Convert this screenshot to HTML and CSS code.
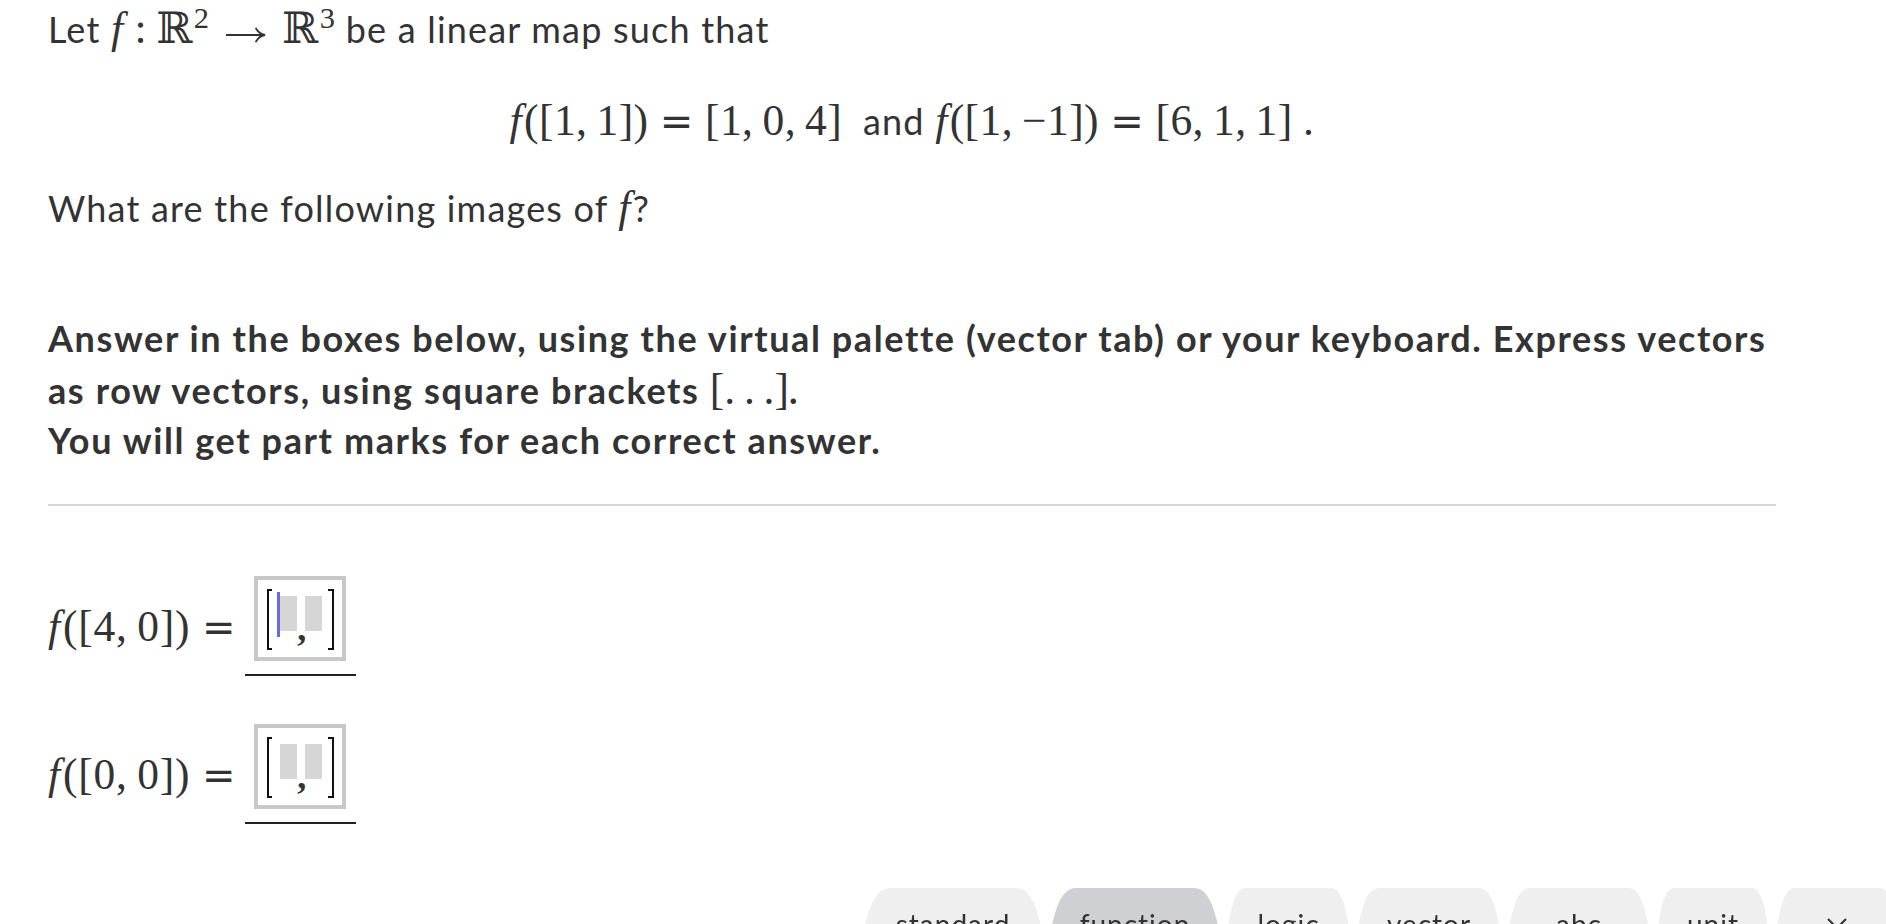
FILE: index.html
```html
<!DOCTYPE html>
<html lang="en">
<head>
<meta charset="utf-8">
<title>Linear map question</title>
<link rel="stylesheet" href="styles.css">
</head>
<body>
<main class="page">
  <p class="intro">Let <span class="m"><i>f</i>&#8201;:&#8201;ℝ<sup>2</sup> <svg class="arrow" width="42" height="18" viewBox="0 0 42 18"><path d="M1 9 H39" stroke="#333" stroke-width="1.8" fill="none"/><path d="M31 2.5 C33 6 36 8.2 40 9 C36 9.8 33 12 31 15.5" stroke="#333" stroke-width="1.8" fill="none" stroke-linecap="round"/></svg> ℝ<sup>3</sup></span> be a linear map such that</p>
  <p class="display"><span class="m"><i>f</i>([1,&#8201;1]) <span class="eq">=</span> [1,&#8201;0,&#8201;4]</span>&nbsp; and <span class="m"><i>f</i>([1,&#8201;−1]) <span class="eq">=</span> [6,&#8201;1,&#8201;1]</span> <span class="m">.</span></p>
  <p class="question">What are the following images of <span class="m"><i>f</i></span>?</p>
  <div class="instr">
    <div>Answer in the boxes below, using the virtual palette (vector tab) or your keyboard. Express vectors</div>
    <div>as row vectors, using square brackets <span class="m light">[.&#8201;.&#8201;.]</span>.</div>
    <div>You will get part marks for each correct answer.</div>
  </div>
  <hr class="rule">
  <div class="rows">
    <div class="row">
      <span class="m lhs"><i>f</i>([4,&#8201;0]) <span class="eq">=</span></span>
      <span class="ans">
        <span class="box">
          <span class="br br-l"></span>
          <span class="slot"><span class="caret"></span></span>
          <span class="comma">,</span>
          <span class="slot"></span>
          <span class="br br-r"></span>
        </span>
      </span>
    </div>
    <div class="row">
      <span class="m lhs"><i>f</i>([0,&#8201;0]) <span class="eq">=</span></span>
      <span class="ans">
        <span class="box">
          <span class="br br-l"></span>
          <span class="slot"></span>
          <span class="comma">,</span>
          <span class="slot"></span>
          <span class="br br-r"></span>
        </span>
      </span>
    </div>
  </div>
</main>
<nav class="kbd">
  <span class="tab t-standard">standard</span>
  <span class="tab t-function active">function</span>
  <span class="tab t-logic">logic</span>
  <span class="tab t-vector">vector</span>
  <span class="tab t-abc">abc</span>
  <span class="tab t-unit">unit</span>
  <span class="tab t-close"><svg width="22" height="22" viewBox="0 0 22 22"><path d="M2 2 L20 20 M20 2 L2 20" stroke="#333" stroke-width="2" fill="none"/></svg></span>
</nav>
</body>
</html>
```

FILE: styles.css
```css
html, body {
  margin: 0;
  background: #ffffff;
}
body {
  color: #333333;
  font-family: "Lato", "Open Sans", sans-serif;
  overflow: hidden;
}
.page {
  padding: 0 110px 0 48px;
}
p { margin: 0; }
.intro, .question, .display {
  font-size: 36px;
  line-height: 50px;
  letter-spacing: 1.2px;
  white-space: nowrap;
}
.intro { padding-top: 3px; }
.m {
  font-family: "Liberation Serif", "DejaVu Serif", serif;
  font-size: 1.21em;
  letter-spacing: 0.4px;
  white-space: nowrap;
}
.m i { font-style: italic; margin-right: 2px; }
.m sup {
  font-size: 0.7em;
  line-height: 0;
  vertical-align: 0.5em;
  margin-left: 1px;
}
.m .eq {
  font-family: "DejaVu Sans", sans-serif;
  font-size: 0.92em;
}
.arrow {
  vertical-align: -1px;
  margin: 0 4px;
}
.display {
  text-align: center;
  margin-top: 41px;
}
.question { margin-top: 36px; }
.instr {
  margin-top: 80px;
  font-size: 36px;
  line-height: 50.5px;
  font-weight: 700;
  letter-spacing: 1.6px;
  white-space: nowrap;
}
.instr .light { font-weight: 400; letter-spacing: 0; }
.rule {
  border: 0;
  border-top: 2px solid #d6d6d6;
  margin: 38px 0 0 0;
}
.rows {
  display: flex;
  flex-direction: column;
  gap: 48px;
  margin-top: 70px;
}
.row {
  display: flex;
  align-items: center;
  gap: 9px;
  font-size: 36px;
}
.lhs {
  font-size: 43.5px;
  letter-spacing: 0.8px;
}
.ans {
  display: inline-block;
  padding: 0 10px 13px 9px;
  border-bottom: 2px solid #222222;
}
.box {
  display: flex;
  align-items: flex-start;
  box-sizing: border-box;
  width: 92px;
  height: 85px;
  border: 4px solid #c8c8c8;
  padding: 9px 7px 0 9px;
  background: #fff;
}
.br {
  width: 5px;
  height: 61px;
  border: 2px solid #111;
  box-sizing: border-box;
  flex: none;
}
.br-l { border-right: 0; margin-right: 8px; }
.br-r { border-left: 0; margin-left: 6px; width: 6px; }
.slot {
  flex: none;
  width: 17px;
  height: 35px;
  margin-top: 7px;
  background: #d6d6d6;
  position: relative;
}
.caret {
  position: absolute;
  left: -3px;
  top: -4px;
  width: 3px;
  height: 45px;
  background: #6b6bd9;
}
.comma {
  flex: none;
  font-family: "Liberation Serif", serif;
  font-size: 36px;
  line-height: 1;
  margin-top: 21px;
  width: 8px;
  text-align: center;
  font-weight: 700;
}
.kbd {
  position: fixed;
  left: 863px;
  top: 888px;
  display: flex;
  gap: 7px;
  white-space: nowrap;
}
.tab {
  height: 44px;
  box-sizing: border-box;
  padding-top: 21px;
  font-family: "Lato", "Open Sans", sans-serif;
  font-size: 28px;
  line-height: 30px;
  letter-spacing: 1px;
  color: #333;
  text-align: center;
  flex: none;
  background: url("data:image/svg+xml,%3Csvg xmlns='http://www.w3.org/2000/svg' viewBox='0 0 180 44' preserveAspectRatio='none'%3E%3Cpath d='M0 44 C6 24 10 0 28 0 H152 C170 0 174 24 180 44 Z' fill='%23efefef'/%3E%3C/svg%3E") no-repeat;
  background-size: 100% 100%;
}
.tab.active {
  background-image: url("data:image/svg+xml,%3Csvg xmlns='http://www.w3.org/2000/svg' viewBox='0 0 180 44' preserveAspectRatio='none'%3E%3Cpath d='M0 44 C6 24 10 0 28 0 H152 C170 0 174 24 180 44 Z' fill='%23cfd0d4'/%3E%3C/svg%3E");
}
.t-standard { width: 180px; }
.t-function { width: 170px; }
.t-logic { width: 123px; }
.t-vector { width: 144px; }
.t-abc { width: 142px; }
.t-unit { width: 112px; }
.t-close { width: 122px; }
.t-close svg { margin-top: 8px; }
```
